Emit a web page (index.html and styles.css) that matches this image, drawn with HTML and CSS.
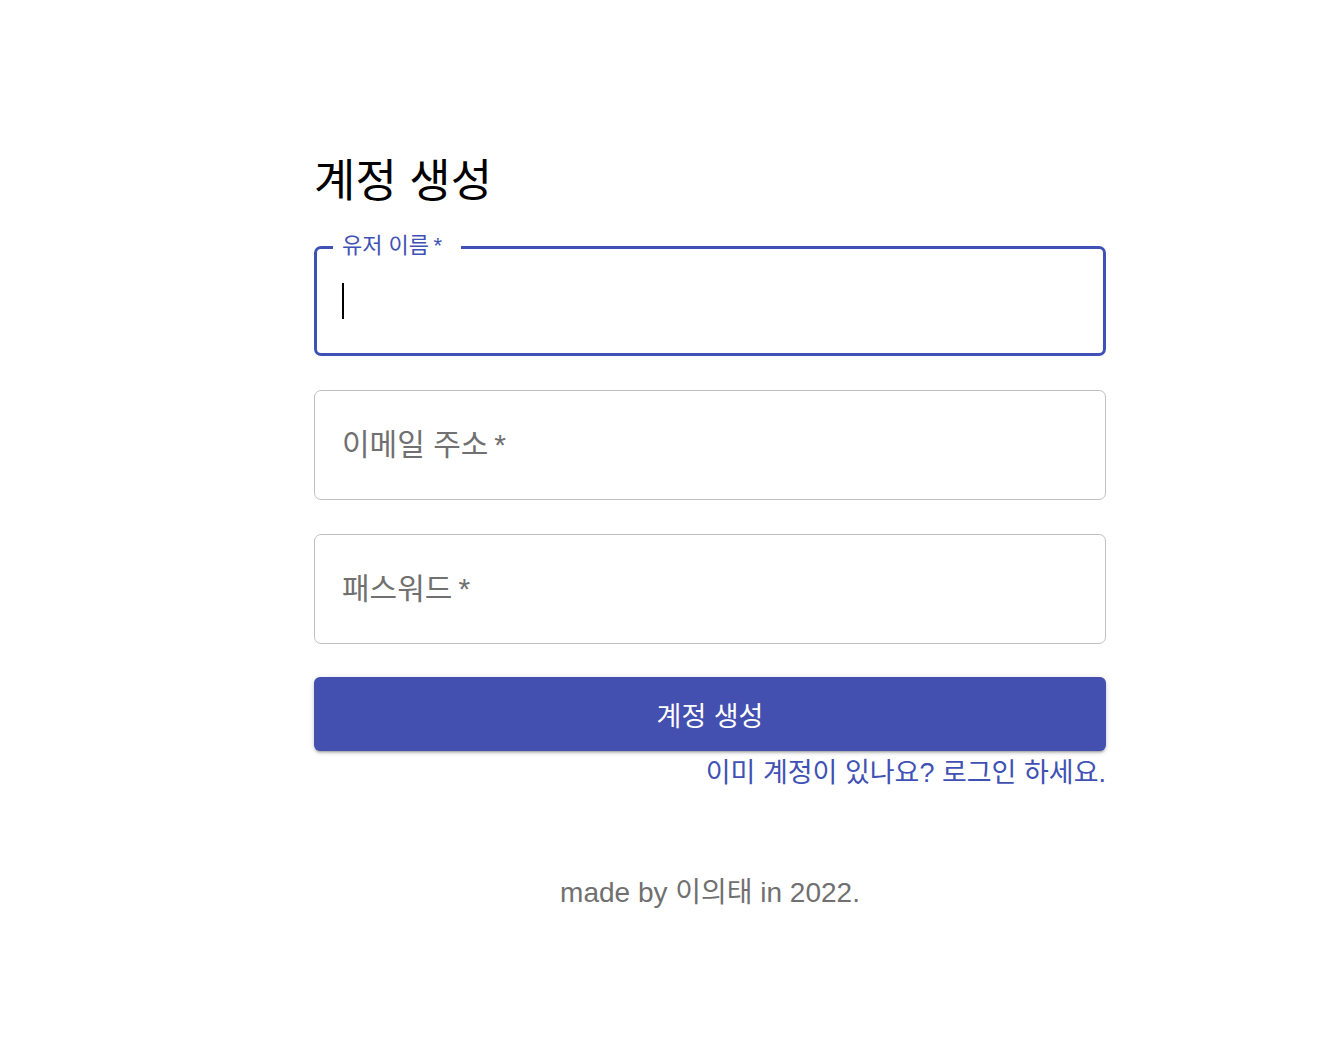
FILE: index.html
```html
<!DOCTYPE html>
<html lang="ko">
<head>
<meta charset="utf-8">
<title>계정 생성</title>
<link rel="stylesheet" href="styles.css">
</head>
<body>
<main class="page">
  <form class="form">
    <h1 class="title">계정 생성</h1>
    <div class="field field-focused">
      <span class="float-label">유저 이름&thinsp;*</span>
      <span class="caret"></span>
    </div>
    <div class="field">
      <span class="placeholder">이메일 주소&thinsp;*</span>
    </div>
    <div class="field">
      <span class="placeholder">패스워드&thinsp;*</span>
    </div>
    <button type="button" class="submit">계정 생성</button>
    <div class="login-row"><a class="login-link" href="#">이미 계정이 있나요? 로그인 하세요.</a></div>
  </form>
  <footer class="footer">made by 이의태 in 2022.</footer>
</main>
</body>
</html>
```
FILE: styles.css
```css
html, body {
  margin: 0;
  padding: 0;
  background: #ffffff;
}
body {
  font-family: "Liberation Sans", "Noto Sans CJK KR", sans-serif;
  padding-left: 76px;
}
.page {
  width: 792px;
  margin: 0 auto;
  padding-top: 152px;
}
.form {
  display: flex;
  flex-direction: column;
}
.title {
  margin: 0;
  font-weight: 400;
  font-size: 45px;
  line-height: 60px;
  height: 60px;
  color: #000;
  margin-bottom: 34px;
}
.field {
  position: relative;
  box-sizing: border-box;
  height: 110px;
  border: 1.5px solid #c0c0c0;
  border-radius: 7px;
  margin-bottom: 34px;
  display: flex;
  align-items: center;
  padding-left: 27px;
}
.field-focused {
  border: 3px solid #3f51b5;
  padding-left: 25px;
}
.placeholder {
  font-size: 30px;
  color: #707070;
  line-height: 36px;
}
.float-label {
  position: absolute;
  left: 16px;
  top: -16px;
  padding: 0 19px 0 9px;
  background: #fff;
  font-size: 22px;
  line-height: 26px;
  color: #3f51b5;
}
.caret {
  width: 2px;
  height: 36px;
  background: #000;
}
.submit {
  height: 74px;
  border: none;
  border-radius: 6px;
  background: #4450b0;
  color: #fff;
  font-family: "Liberation Sans", "Noto Sans CJK KR", sans-serif;
  font-size: 27px;
  box-shadow: 0 3px 2px -2px rgba(0,0,0,0.2), 0 2px 3px 0 rgba(0,0,0,0.14), 0 1px 6px 0 rgba(0,0,0,0.12);
  margin-top: -1px;
  padding: 0;
}
.login-row {
  display: flex;
  justify-content: flex-end;
  margin-top: 6px;
}
.login-link {
  font-size: 27px;
  line-height: 32px;
  color: #3f51b5;
  text-decoration: none;
}
.footer {
  margin-top: 88px;
  text-align: center;
  font-size: 28px;
  line-height: 32px;
  color: #707070;
}
```
